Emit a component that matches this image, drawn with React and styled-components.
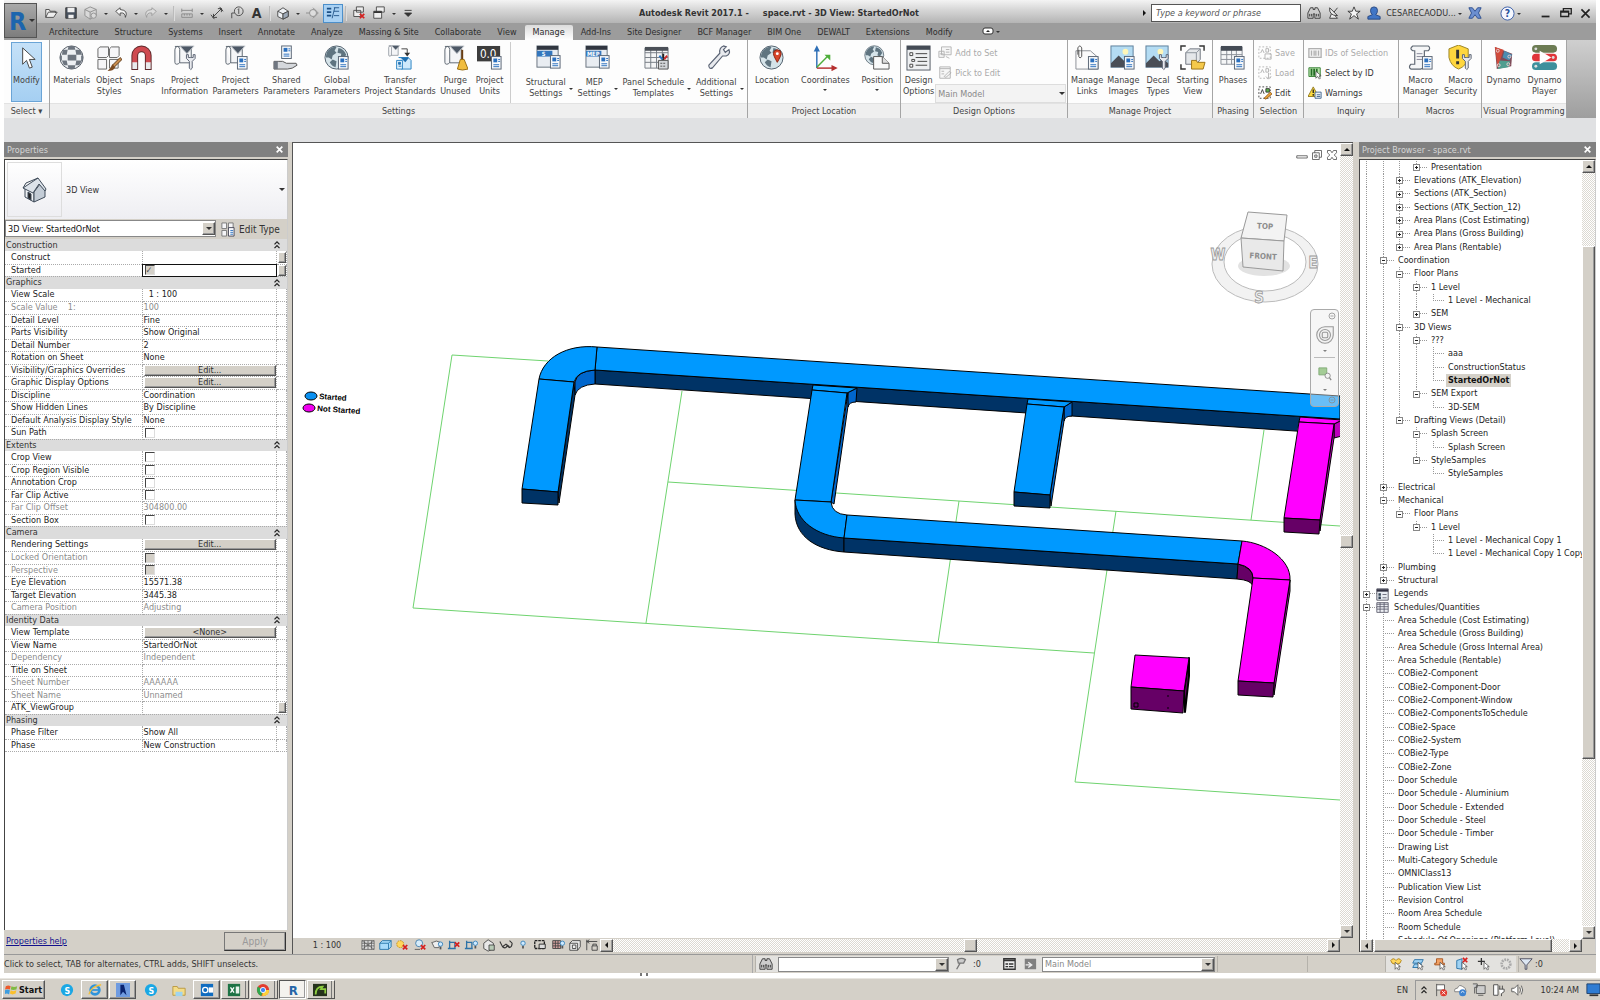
import React from 'react';
import styled, { createGlobalStyle, css } from 'styled-components';

const GlobalStyle = createGlobalStyle`
    * { box-sizing: border-box; }
    html, body { margin: 0; background: #fff; }
    body, button, input, select {
        font-family: 'DejaVu Sans Condensed', 'Open Sans', 'Liberation Sans', sans-serif;
        font-size: 9px;
        color: #333;
    }
    button { padding: 0; border: 0; background: none; }
`;

const raised = css`
    background: #d4d0c8;
    border: 1px solid;
    border-color: #fff #555 #555 #fff;
    box-shadow: inset -1px -1px #999;
`;

const checker = css`
    background: conic-gradient(#fff 25%, #dcd9d2 0 50%, #fff 0 75%, #dcd9d2 0) 0 0 / 2px 2px;
`;

/* ---------- frame ---------- */

const Screen = styled.div`
    height: 100vh;
    display: flex;
    flex-direction: column;
    overflow: hidden;
`;

const AppWindow = styled.div`
    flex: 1;
    min-height: 0;
    margin: 0 4px;
    display: flex;
    flex-direction: column;
    background: #d4d0c8;
`;

const Header = styled.header`
    position: relative;
`;

const AppButton = styled.button`
    position: absolute;
    left: 0;
    top: 3px;
    width: 33px;
    height: 35px;
    border: 1px solid #555;
    background: linear-gradient(#a9a9a9, #7d7d7d);
    display: flex;
    align-items: center;
    justify-content: center;
`;

const TitleBar = styled.div`
    height: 23px;
    padding: 3px 0 0 37px;
    background: linear-gradient(#f4f4f4, #d8d8d8 40%, #b4b4b4);
    display: flex;
    align-items: center;
`;

const QuickButton = styled.button`
    width: ${(props) => (props.$narrow ? 10 : 20)}px;
    height: 19px;
    display: flex;
    align-items: center;
    justify-content: center;
    ${(props) => props.$on && css`
        background: #a9d1f3;
        border: 1px solid #4c8fca;
    `}
`;

const QuickDivider = styled.span`
    width: 2px;
    height: 15px;
    margin: 0 2px;
    background: #bbb;
    border-right: 1px solid #ddd;
`;

const Caption = styled.h1`
    flex: 1;
    margin: 0;
    padding-right: 4px;
    font-size: 9px;
    text-align: center;
    white-space: pre;
`;

const TitleTools = styled.div`
    display: flex;
    align-items: center;
    gap: 5px;
    padding-right: 3px;
`;

const SearchInput = styled.input`
    width: 150px;
    height: 18px;
    padding: 0 4px;
    border: 1px solid #555;
    background: #fff;
    font-style: italic;
    &::placeholder { color: #555; opacity: 1; }
`;

const IconButton = styled.button`
    width: ${(props) => props.$w || 15}px;
    height: 18px;
    display: flex;
    align-items: center;
    justify-content: center;
    gap: 2px;
    white-space: nowrap;
`;

const TabBar = styled.nav`
    height: 17px;
    padding-left: 37px;
    background: #9c9c9c;
    display: flex;
    align-items: flex-end;
`;

const Tab = styled.a`
    height: 15px;
    line-height: 14px;
    padding: 0 8px;
    color: #2e2e2e;
    text-decoration: none;
    white-space: nowrap;
    ${(props) => props.$active && css`
        background: linear-gradient(#dcdcdc, #fff);
        border-radius: 2px 2px 0 0;
    `}
`;

/* ---------- ribbon ---------- */

const Ribbon = styled.div`
    height: 78px;
    display: flex;
    background: linear-gradient(#cfcfcf, #9e9e9e);
`;

const Group = styled.section`
    width: ${(props) => props.$w}px;
    flex: none;
    display: flex;
    flex-direction: column;
    background: #fdfdfd;
    border-right: 1px solid #a5a5a5;
`;

const GroupBody = styled.div`
    flex: 1;
    display: flex;
    justify-content: space-around;
    padding: 2px 1px 0;
`;

const GroupName = styled.div`
    height: 15px;
    line-height: 14px;
    background: #efefef;
    border-top: 1px solid #e2e2e2;
    text-align: center;
    white-space: nowrap;
    color: #444;
`;

const Cluster = styled.div`
    width: ${(props) => props.$w}px;
    padding-right: 4px;
    display: flex;
    justify-content: space-around;
    & + & {
        padding: 0 0 0 12px;
        border-left: 1px solid #ccc;
    }
`;

const ToolButton = styled.button`
    min-width: 31px;
    height: 60px;
    padding: 3px 1px 0;
    display: flex;
    flex-direction: column;
    align-items: center;
    line-height: 11px;
    white-space: pre;
    color: #444;
    ${(props) => props.$on && css`
        background: linear-gradient(#c5e1f8, #a5cff2);
        border: 1px solid #6aa4d6;
        padding-top: 2px;
    `}
`;

const ToolLabel = styled.span`
    margin-top: ${(props) => (props.$low ? 6 : 4)}px;
    display: flex;
    align-items: center;
    gap: 3px;
    flex-direction: ${(props) => (props.$under ? 'column' : 'row')};
`;

const Stack = styled.div`
    flex: ${(props) => (props.$grow ? 1 : 'none')};
    display: flex;
    flex-direction: column;
    gap: 2px;
    padding-top: 2px;
`;

const SmallTool = styled.button`
    height: 18px;
    display: flex;
    align-items: center;
    gap: 3px;
    padding-left: 3px;
    white-space: nowrap;
    color: ${(props) => (props.disabled ? '#aaa' : '#333')};
    svg { opacity: ${(props) => (props.disabled ? 0.45 : 1)}; }
`;

const OptionsBar = styled.div`
    height: 24px;
    background: #e0e1e3;
`;

/* ---------- shared controls ---------- */

const SelectFrame = styled.span`
    height: ${(props) => props.$h || 17}px;
    flex: ${(props) => (props.$w ? 'none' : 1)};
    width: ${(props) => (props.$w ? `${props.$w}px` : 'auto')};
    display: flex;
    align-items: center;
    background: ${(props) => (props.$flat ? '#f3f3f3' : '#fff')};
    border: 1px solid ${(props) => (props.$flat ? '#ddd' : '#888')};
`;

const Select = styled.select`
    appearance: none;
    flex: 1;
    min-width: 0;
    height: 100%;
    border: 0;
    padding: 0 2px;
    background: transparent;
    opacity: 1;
    color: ${(props) => (props.disabled ? '#888' : '#111')};
`;

const Arrow = styled.span`
    border: ${(props) => (props.$small ? 2 : 3)}px solid transparent;
    ${(props) => ({
        up: css`border-bottom-color: #111; margin-top: -3px;`,
        down: css`border-top-color: #333; margin-bottom: -3px;`,
        left: css`border-right-color: #111; margin-left: -3px;`,
        right: css`border-left-color: #111; margin-right: -3px;`,
    }[props.$to || 'down'])}
`;

const ScrollButton = styled.button`
    ${raised}
    width: 13px;
    height: 13px;
    flex: none;
    display: flex;
    align-items: center;
    justify-content: center;
`;

const ScrollTrack = styled.div`
    ${checker}
    display: flex;
    flex: ${(props) => (props.$fill ? 1 : 'none')};
    flex-direction: ${(props) => (props.$vertical ? 'column' : 'row')};
    ${(props) => (props.$vertical ? 'width: 13px;' : 'height: 13px;')}
`;

const Space = styled.span`
    flex: ${(props) => props.$n};
`;

const Thumb = styled.span`
    ${raised}
    flex: ${(props) => props.$n || '0 0 13px'};
`;

function Scrollbar({ vertical, fill, before, thumb, after }) {
    return (
        <ScrollTrack $vertical={vertical} $fill={fill}>
            <ScrollButton aria-label="Scroll back"><Arrow $to={vertical ? 'up' : 'left'} /></ScrollButton>
            <Space $n={before} />
            <Thumb $n={thumb} />
            <Space $n={after} />
            <ScrollButton aria-label="Scroll forward"><Arrow $to={vertical ? 'down' : 'right'} /></ScrollButton>
        </ScrollTrack>
    );
}

/* ---------- palettes ---------- */

const Workspace = styled.main`
    flex: 1;
    min-height: 0;
    display: flex;
    gap: 4px;
`;

const Palette = styled.aside`
    width: ${(props) => props.$w}px;
    flex: none;
    display: flex;
    flex-direction: column;
    padding-bottom: 2px;
`;

const PaletteTitle = styled.div`
    height: 15px;
    margin-bottom: 2px;
    padding: 0 4px 0 3px;
    background: #808080;
    color: #d6d6d6;
    display: flex;
    align-items: center;
    justify-content: space-between;
`;

const PaletteBody = styled.div`
    flex: 1;
    min-height: 0;
    display: flex;
    flex-direction: column;
    background: #fff;
    border: 1px solid #444;
    border-right-color: #ccc;
    border-bottom: 0;
`;

const TypeSelector = styled.button`
    height: 59px;
    padding: 2px;
    display: flex;
    align-items: center;
    gap: 4px;
    text-align: left;
    background: linear-gradient(#fff, #eeeef2);
`;

const TypePreview = styled.span`
    width: 55px;
    height: 55px;
    border: 1px solid #ddd;
    display: flex;
    align-items: center;
    justify-content: center;
`;

const Grow = styled.span`
    flex: 1;
`;

const FilterRow = styled.div`
    height: 20px;
    padding: 1px 0;
    display: flex;
    gap: 4px;
    background: #d4d0c8;
`;

const EditType = styled.button`
    width: 67px;
    display: flex;
    align-items: center;
    gap: 4px;
    font-size: 10px;
`;

const PropertyTable = styled.table`
    width: 100%;
    border-collapse: collapse;
    table-layout: fixed;
    line-height: 11px;
    tr { height: 12px; }
    tr:nth-child(even) { height: 13px; }
    th, td {
        height: inherit;
        padding: 0;
        font-weight: normal;
        text-align: left;
        white-space: pre;
        border-bottom: 1px dotted #aaa;
        border-right: 1px dotted #aaa;
    }
`;

const SectionRow = styled.tr`
    th {
        background: #dcdcdc;
        border: 0;
        padding: 0 5px 0 1px;
    }
`;

const SectionHead = styled.div`
    display: flex;
    justify-content: space-between;
    align-items: center;
`;

const PropertyRow = styled.tr`
    color: ${(props) => (props.$muted ? '#8c8c8c' : '#222')};
    th { padding-left: 6px; }
    td { padding-left: 1px; }
    ${(props) => props.$focus && css`
        td:nth-child(2) { border: 1px solid #111; }
    `}
`;

const CheckBox = styled.input`
    appearance: none;
    display: block;
    width: 10px;
    height: 10px;
    margin: 0 0 0 1px;
    border: 1px solid;
    border-color: #444 #ddd #ddd #444;
    background: ${(props) => (props.disabled || props.defaultChecked ? '#d4d0c8' : '#fff')};
    &:checked::before {
        content: '✓';
        display: block;
        line-height: 8px;
        color: #555;
    }
`;

const RowButton = styled.button`
    ${raised}
    display: block;
    width: 100%;
    height: 11px;
    line-height: 9px;
`;

const PaletteFooter = styled.div`
    height: 22px;
    padding: 0 2px;
    display: flex;
    align-items: center;
    justify-content: space-between;
    a { color: #11118c; }
`;

const ApplyButton = styled.button`
    ${raised}
    width: 62px;
    height: 19px;
    border-color: #777 #333 #333 #777;
    color: #999;
    font-size: 10px;
`;

/* ---------- project browser ---------- */

const TreeArea = styled.div`
    flex: 1;
    min-height: 0;
    display: flex;
`;

const Tree = styled.ul`
    flex: 1;
    margin: 0;
    padding: 1px 0 0 6px;
    overflow: hidden;
    list-style: none;
`;

const TreeRow = styled.li`
    height: 13px;
    display: flex;
    white-space: nowrap;
    line-height: 13px;
    color: #222;
    &:nth-child(3n) { height: 14px; }
`;

const dotsDown = 'repeating-linear-gradient(#999 0 1px, transparent 1px 2px)';
const dotsAcross = 'repeating-linear-gradient(90deg, #999 0 1px, transparent 1px 2px)';

const Guide = styled.span`
    width: ${(props) => (props.$level % 3 === 1 ? 16 : 17)}px;
    flex: none;
    background: ${(props) => (props.$line ? dotsDown : 'none')} 0 0 / 1px 100% no-repeat;
`;

const Elbow = styled.span`
    width: 15px;
    flex: none;
    display: flex;
    align-items: center;
    background: ${dotsDown} 0 0 / 1px ${(props) => (props.$more ? '100%' : '50%')} no-repeat,
        ${dotsAcross} 0 6px / 11px 1px no-repeat;
`;

const Toggle = styled.button`
    width: 7px;
    height: 7px;
    margin-left: -3px;
    border: 1px solid #888;
    background: linear-gradient(#222, #222) center / 3px 1px no-repeat,
        linear-gradient(#222, #222) center / ${(props) => (props.$plus ? '1px 3px' : '0 0')} no-repeat, #fff;
`;

const Leaf = styled.span`
    ${(props) => props.$current && css`
        margin: 0 -2px;
        padding: 0 2px;
        background: #d4d0c8;
        font-weight: bold;
        color: #111;
    `}
`;

const TreeIcon = styled.span`
    width: 13px;
    display: flex;
    align-items: center;
    margin: 0 5px 0 -5px;
`;

const Corner = styled.span`
    width: 13px;
    height: 13px;
    background: #d4d0c8;
`;

const Line = styled.div`
    display: flex;
`;

/* ---------- view ---------- */

const ViewColumn = styled.section`
    flex: 1;
    min-width: 0;
    display: flex;
    flex-direction: column;
    border-left: 1px solid #555;
    border-top: 1px solid #555;
    margin-right: 2px;
    padding-bottom: 2px;
`;

const ViewRow = styled.div`
    flex: 1;
    min-height: 0;
    display: flex;
`;

const Viewport = styled.div`
    flex: 1;
    min-width: 0;
    position: relative;
    background: #fff;
    overflow: hidden;
`;

const Model = styled.svg`
    display: block;
    width: 100%;
    height: 100%;
`;

const ViewButtons = styled.div`
    position: absolute;
    top: 3px;
    right: 1px;
    display: flex;
`;

const NavBar = styled.div`
    position: absolute;
    top: 166px;
    right: 1px;
    width: 29px;
    height: 98px;
    border: 1px solid #aaa;
    border-radius: 4px;
    background: rgba(235, 235, 235, 0.45);
    display: flex;
    flex-direction: column;
    align-items: center;
    justify-content: space-between;
    padding: 2px;
    & > ${Arrow} { opacity: 0.6; }
`;

const NavRule = styled.span`
    width: 21px;
    height: 1px;
    background: #bbb;
`;

const NavEdge = styled.button`
    align-self: flex-end;
    height: 8px;
    width: 8px;
    display: flex;
`;

const ViewBar = styled.div`
    height: 14px;
    display: flex;
    align-items: center;
`;

const ScaleButton = styled.button`
    width: 66px;
    padding-left: 2px;
    text-align: center;
`;

const ViewTool = styled.button`
    width: 17px;
    height: 14px;
    flex: none;
    display: flex;
    align-items: center;
    justify-content: center;
    &:nth-of-type(4n) { width: 18px; }
`;

/* ---------- bottom ---------- */

const StatusBar = styled.footer`
    height: 19px;
    display: flex;
    align-items: center;
    gap: 2px;
    border-top: 1px solid #999;
`;

const StatusText = styled.div`
    flex: 1;
    height: 100%;
    padding-top: 4px;
    border-right: 1px solid #aaa;
`;

const StatusCell = styled.div`
    width: ${(props) => props.$w}px;
    height: 16px;
    display: flex;
    align-items: center;
    justify-content: ${(props) => (props.$spread ? 'space-around' : 'flex-start')};
    gap: 2px;
    background: ${(props) => (props.$light ? '#e3e2df' : 'transparent')};
    border-left: 1px solid #b5b2ab;
`;

const Grip = styled.div`
    height: 5px;
    padding-left: 40%;
    background: #fff;
    display: flex;
    gap: 4px;
    &::before, &::after {
        content: '';
        width: 2px;
        height: 3px;
        background: #777;
    }
`;

const TaskBar = styled.div`
    height: 22px;
    padding: 0 0 0 2px;
    display: flex;
    align-items: center;
    background: #d4d0c8;
    border-top: 1px solid #e8e6e1;
`;

const StartButton = styled.button`
    ${raised}
    width: 43px;
    height: 19px;
    margin-right: 8px;
    display: flex;
    align-items: center;
    justify-content: center;
    gap: 1px;
    font-weight: bold;
    color: #111;
`;

const TaskButton = styled.button`
    width: 27px;
    height: 19px;
    margin-right: 1px;
    display: flex;
    align-items: center;
    justify-content: center;
    ${(props) => props.$open && raised}
    ${(props) => props.$open === 'many' && css`
        width: 28px;
        box-shadow: inset -2px 0 #d4d0c8, inset -3px 0 #777;
        padding-right: 3px;
    `}
    ${(props) => props.$active && css`
        background: #f4f2ee;
        border-color: #555 #fff #fff #555;
    `}
`;

const Tray = styled.div`
    width: 185px;
    height: 20px;
    margin-left: 7px;
    padding-left: 3px;
    border-left: 1px solid #999;
    border-top: 1px solid #999;
    display: flex;
    align-items: center;
    gap: 5px;
    time { flex: 1; text-align: right; padding-right: 2px; white-space: nowrap; }
`;

/* ---------- icon drawings ---------- */

const sheet = (x, y) => (
    <g>
        <rect x={x} y={y} width="10" height="13" fill="#f7f9fb" stroke="#5a6675" />
        <rect x={x + 2} y={y + 2} width="4" height="4" fill="#2a6fbe" />
        <path d={`M${x + 7} ${y + 3}h2M${x + 7} ${y + 5}h2M${x + 2} ${y + 8.5}h6M${x + 2} ${y + 10.5}h6`} stroke="#2a6fbe" />
    </g>
);

const scroll = (
    <g stroke="#5f6873" fill="#f4f5f7">
        <path d="M3 1.500h17v17H8v-14Q8 2 5.500 1.500Q3 2 3 5v13q0 2 2 2t3-2" />
        <path d="M8 1h15l-7.500 8Z" fill="#4d5866" stroke="#c9cdd2" />
    </g>
);

const globe = (
    <g>
        <circle cx="13" cy="13" r="12" fill="#d5e3e9" stroke="#51606c" />
        <path d="M5 5q4-4 8-3l-2 4 2 2-4 3-1 4-3-2-3 0q0-5 3-8ZM15 3q6 1 8 7l-3 5-3-2 1-4-4-1ZM9 15l4 2-1 6q-4-1-6-5Z" fill="#5f7480" />
    </g>
);

const wrench = (x, y, k) => (
    <path
        transform={`translate(${x} ${y}) scale(${k})`}
        d="M2 22 L14 9 Q13 3 18 1 L21 2 L18 5 L20 8 L24 5 Q26 10 21 12 L17 12 L6 25 Q2 27 2 22Z"
        fill="#e8eaee"
        stroke="#596273"
        strokeWidth={1.2 / k}
    />
);

// upright spanner laid over a bigger icon
const spanner = (
    <path
        d="M15 10v4l3 3v7q1.500 3 3 0v-7l3-3v-4l-2 0v3h-2l-1 0h-2v-3Z"
        fill="#e8eaee"
        stroke="#596273"
        strokeLinejoin="round"
    />
);

const picture = (
    <g>
        <rect x="1" y="1" width="23" height="22" fill="#b4dcf3" stroke="#5c7e9a" />
        <circle cx="16" cy="7" r="3" fill="#fff6b8" />
        <path d="M1 19l8-8 6 6 4-3 5 5v4H1Z" fill="#4a4e56" />
    </g>
);

const windowFrame = (text) => (
    <g>
        <rect x="1" y="1" width="22" height="22" fill="#e9edf2" stroke="#68727e" />
        <rect x="1" y="1" width="22" height="4" fill="#303640" />
        <rect x="1" y="6" width="16" height="6" fill="#3477bd" />
        <text x={text.length > 1 ? 2 : 6} y="11" fontSize="6" fontWeight="bold" fill="#fff">{text}</text>
        {sheet(15, 11)}
    </g>
);

const big = {
    modify: <path d="M9 3v17l4-4 3 8 3-1-3-8h6Z" fill="#fff" stroke="#444" />,
    materials: (
        <g>
            <circle cx="13" cy="13" r="12" fill="#edf0f3" stroke="#555d66" />
            <path d="M10 1h6l1 4H9ZM4 5l5 0-1 5H3ZM17 5h5l2 5h-6ZM9 10h9v6H9ZM1 11h2v5H1ZM23 11h2v5h-2ZM3 16h5l1 5H5ZM18 16h6l-3 5h-4ZM9 21h8l-1 4h-6Z" fill="#6d757f" />
        </g>
    ),
    styles: (
        <g>
            <path d="M2 4l2-2h9v9l-2 2H2ZM14 4l2-2h8v9l-2 2h-8ZM2 15h9v10H2ZM14 15h9v9h-9Z" fill="#f6f6f8" stroke="#666" />
            <path d="M25 13l2 2-8 8-2-2Z" fill="#c98d4e" stroke="#5e3b1c" />
            <path d="M17 20l3 3q-2 4-8 4 3-2 5-7Z" fill="#7b4a21" />
        </g>
    ),
    snaps: (
        <g fill="none">
            <path d="M6 26V11a7 7 0 0 1 14 0v15" stroke="#5e2a2c" strokeWidth="7" />
            <path d="M6 19V11a7 7 0 0 1 14 0v8" stroke="#cf4a50" strokeWidth="5" />
            <path d="M6 18v7M20 18v7" stroke="#e8eaec" strokeWidth="5" />
        </g>
    ),
    info: <g>{scroll}{spanner}</g>,
    params: <g>{scroll}{sheet(15, 12)}</g>,
    shared: (
        <g>
            {sheet(9, 1)}
            <path d="M1 17h5q4-1 8 2h10l1 2q-5 4-10 4H1Z" fill="#d5d8dc" stroke="#555" />
            <path d="M1 17h4v8H1Z" fill="#707781" />
        </g>
    ),
    global: <g>{globe}{sheet(15, 12)}</g>,
    transfer: (
        <g>
            <g transform="scale(.58)">{scroll}</g>
            <path d="M15 4h6v5" fill="none" stroke="#444" /><path d="M18 8h6l-3 4Z" fill="#333" />
            <path d="M12 13h10l3 3v9H15v-9" fill="#cfe9fb" stroke="#2b83c4" />
            <path d="M14 13h9l-4 5Z" fill="#1f6dae" />
            <path d="M10 16h6v9h-6Z" fill="#e6f4fd" stroke="#2b83c4" />
            <path d="M12 18h2v2h-2ZM12 22h3" stroke="#2878b8" fill="#2878b8" />
        </g>
    ),
    purge: (
        <g>
            {scroll}
            <path d="M21 5v10" stroke="#6a3d12" strokeWidth="2" />
            <path d="M19 15h4l4 10q-6 2-11 0Z" fill="#f1bd3e" stroke="#996c10" />
        </g>
    ),
    units: (
        <g>
            <rect x="0" y="1" width="24" height="16" fill="#3d3d3d" />
            <text x="3" y="14" fontSize="12" fill="#fff">0.0</text>
            {sheet(15, 12)}
        </g>
    ),
    structural: windowFrame('S'),
    mep: windowFrame('MEP'),
    panel: (
        <g>
            <path d="M1 3h24v21H1ZM1 8h24M1 13h24M1 18h24M7 3v21M13 3v21M19 3v21" fill="#f4f5f6" stroke="#767c84" />
            <rect x="1" y="2" width="24" height="4" fill="#4b5058" />
            <path d="M20 9v7" stroke="#222" strokeWidth="2" /><path d="M16 11l3 4" stroke="#2575c8" strokeWidth="2" /><path d="M24 11l-3 4" stroke="#d02a2a" strokeWidth="2" />
            <path d="M15 16h10v9H15Z" fill="#d3d6d9" stroke="#555" /><path d="M17 19h6M17 22h6" stroke="#555" strokeDasharray="2 1" />
        </g>
    ),
    wrench: wrench(0, 0, 0.95),
    location: (
        <g>
            {globe}
            <path d="M19 18q-4-7-4-9a4 4 0 0 1 8 0q0 2-4 9Z" fill="#d8452a" stroke="#8a2412" /><circle cx="19" cy="9" r="1.500" fill="#fff" />
        </g>
    ),
    coordinates: (
        <g fill="none" strokeWidth="1.500">
            <path d="M5 24V5" stroke="#2e6fb6" /><path d="M3 6l2-4 2 4Z" fill="#2e6fb6" stroke="#2e6fb6" />
            <path d="M5 24h17" stroke="#b52f2f" /><path d="M21 22l4 2-4 2Z" fill="#b52f2f" stroke="#b52f2f" />
            <path d="M5 23L17 11" stroke="#4fae3a" /><path d="M13 10h6v6Z" fill="#4fae3a" />
        </g>
    ),
    position: (
        <g>
            <g transform="scale(.82)">{globe}</g>
            <path d="M10 12h9l7 7v6H10Z" fill="#fafafa" stroke="#555" /><path d="M19 12v7h7" fill="#ddd" stroke="#555" />
        </g>
    ),
    options: (
        <g>
            <rect x="1" y="1" width="24" height="25" fill="#eef0f2" stroke="#555c66" /><rect x="1" y="1" width="24" height="4" fill="#444b55" />
            <path d="M10 9h12M10 13h12M12 17h10M10 21h12" stroke="#444" /><path d="M4 8h3v3H4ZM6 15h3v2H6ZM4 20h3v3H4Z" fill="#fff" stroke="#444" />
        </g>
    ),
    links: (
        <g>
            <path d="M2 6h15l8 7v12H2Z" fill="#fbfbfb" stroke="#8b9096" />
            <path d="M4 10V3q2-4 4 0v9q-2 3-3 0V5" fill="none" stroke="#555" />{sheet(15, 12)}
        </g>
    ),
    images: <g>{picture}{sheet(15, 12)}</g>,
    decal: <g>{picture}{spanner}</g>,
    starting: (
        <g>
            <path d="M1 6V1h5M20 1h5v5M1 20v5h5" fill="none" stroke="#333" strokeWidth="1.500" />
            <path d="M6 8l4-4h11v11l-4 5H6Z" fill="#e4e7ea" stroke="#707780" /><path d="M6 8h11v12M17 8l4-4" fill="none" stroke="#8d949c" />
            <path d="M12 16h5l1 2h8l-2 7H12Z" fill="#f5c94b" stroke="#9b7417" />
        </g>
    ),
    phases: (
        <g>
            <path d="M1 2h22v18H1ZM1 10h22M1 15h22M7 5v15M12 5v15M17 5v15" fill="#f5f6f7" stroke="#8a9098" /><rect x="1" y="1" width="22" height="5" fill="#444b55" />
            {sheet(15, 12)}
        </g>
    ),
    macroManager: (
        <g>
            <path d="M5 1h16q3 2 0 5h-4v14q0 4-4 5H3q-3-2 0-5h4V6H5q-4-2 0-5Z" fill="#f5f6f7" stroke="#5f6873" strokeWidth="1.200" /><path d="M9 9h6M9 12h6M9 15h6" stroke="#889" />
            {sheet(15, 12)}
        </g>
    ),
    macroSecurity: (
        <g>
            <path d="M11 0l10 4v9q-2 9-10 12Q3 22 1 13V4Z" fill="#ffd73e" stroke="#9a8326" /><path d="M10 5v9M10 17v3" stroke="#333" strokeWidth="3" />
            {spanner}
        </g>
    ),
    dynamo: (
        <g>
            <path d="M4 2l18 7-1 13-15 3Z" fill="#7f4b58" /><path d="M4 2l9 3-6 19Z" fill="#d04a3b" /><path d="M14 6l8 4-3 6-7-3Z" fill="#4b8db1" /><path d="M9 16l11 1-2 6-11 2Z" fill="#4f9e90" />
            <g fill="none" stroke="#e9cfd0"><circle cx="7" cy="6" r="1.500" /><circle cx="19" cy="12" r="1.500" /><circle cx="8" cy="21" r="1.500" /><circle cx="18" cy="20" r="1.500" /></g>
        </g>
    ),
    player: (
        <g>
            <rect x="0" y="0" width="26" height="8" rx="4" fill="#6d7c54" /><rect x="0" y="9" width="26" height="8" rx="4" fill="#e0353a" /><rect x="0" y="18" width="26" height="8" rx="4" fill="#3d8f9c" />
            <path d="M8 6l12 7-12 7Z" fill="#fff" /><g fill="#ddd"><circle cx="4" cy="4" r="1.500" /><circle cx="22" cy="13" r="1.500" /><circle cx="4" cy="22" r="1.500" /></g>
        </g>
    ),
};

const lamp = (x, y) => (
    <g>
        <circle cx={x} cy={y} r="2.500" fill="#cfeaff" stroke="#3580b8" />
        <path d={`M${x} ${y + 3}v3`} stroke="#555" strokeWidth="2" />
    </g>
);
const redX = (x, y) => <path d={`M${x} ${y}l5 5m0-5l-5 5`} stroke="#d6201f" strokeWidth="2" />;
const cursor = (x, y) => <path d={`M${x} ${y}v8l2-2 2 3 1-1-1-3h2Z`} fill="#fff" stroke="#444" strokeWidth=".8" />;

const small = {
    open: <path d="M2 13V4h4l1 2h6v2M2 13l3-6h10l-4 6Z" fill="#eee" stroke="#444" />,
    save: <g><path d="M2 2h12v12H2Z" fill="#49525f" stroke="#333" /><path d="M4 2h8v5H4ZM5 10h6v4H5Z" fill="#f0f0f0" /></g>,
    sync: <g fill="#d9d9d9" stroke="#8b8b8b"><path d="M7 1l7 3v7l-7 4-6-4V4ZM1 4l6 3 7-3M7 7v8" /><circle cx="11" cy="11" r="3" /></g>,
    undo: <path d="M7 2L2 6l5 5V8q6-1 6 5 4-8-6-9Z" fill="#f5f5f5" stroke="#444" />,
    redo: <path d="M9 2l5 4-5 5V8Q3 7 3 13-1 5 9 4Z" fill="#ddd" stroke="#999" />,
    measure: <path d="M2 5h12M2 3v4M14 3v4M2 9h12v4H2ZM5 9v2M8 9v2M11 9v2" fill="none" stroke="#888" />,
    dim: <path d="M3 13L13 3M1 10l4 5M11 1l4 5M4 9v4h4M9 3h4v4" fill="none" stroke="#333" />,
    tag: <g fill="none" stroke="#444"><circle cx="10" cy="6" r="5" /><path d="M5 8H2v6M10 3v6M9 4l1-1" /></g>,
    letter: <text x="2" y="14" fontSize="16" fontWeight="bold" fill="#333">A</text>,
    house: <g stroke="#444"><path d="M2 6l6-4 6 4v6l-6 3-6-3Z" fill="#eef1f5" /><path d="M2 6l6 3 6-3M8 9v6" fill="none" /><path d="M8 9l6-3v6l-6 3Z" fill="#9da9b8" /></g>,
    section: <g stroke="#888" fill="#ddd"><path d="M8 2l6 6-6 6M0 8h4" fill="none" /><circle cx="8" cy="8" r="4" /></g>,
    thin: <g stroke="#1b4f85"><path d="M1 3h5M1 7h5M1 11h5" strokeWidth="2" /><path d="M9 2h6M9 6h6M9 11h6M7 14l3-12" /></g>,
    closeHidden: <g><path d="M5 1h8v6H5ZM2 5h8v7H2Z" fill="#eee" stroke="#444" />{redX(9, 9)}</g>,
    switchWin: <g><path d="M5 1h9v6H5ZM2 6h9v8H2Z" fill="#eee" stroke="#444" /><path d="M2 7h9" stroke="#333" strokeWidth="2" /></g>,
    customize: <path d="M3 5h8M3 8h8l-4 4Z" stroke="#333" fill="#333" />,
    binoculars: <path d="M4 2h3v2h2V2h3l3 6v6H9V9H7v5H1V8ZM3 9v3M5 9v3M11 9v3M13 9v3" fill="#ccc" stroke="#333" />,
    dish: <path d="M3 2q-1 9 9 9M3 2l9 9M8 7l4-5M5 9l-2 5h9l-3-3" fill="#eee" stroke="#333" />,
    star: <path d="M8 1l2 5h5l-4 3 2 6-5-4-5 4 2-6-4-3h5Z" fill="#f5f5f5" stroke="#333" />,
    person: <path d="M8 1q4 0 4 4 0 3-2 5l5 2v3H1v-3l5-2Q4 8 4 5q0-4 4-4Z" fill="#4176c6" stroke="#23437f" />,
    exchange: <path d="M1 2h4l3 4 3-4h4l-3 6 3 6h-4l-3-4-3 4H1l3-6Z" fill="#6c8fd0" stroke="#28498c" />,
    help: <g><circle cx="8" cy="8" r="7" fill="#f6f8ff" stroke="#3a5ea8" /><text x="5" y="12" fontSize="11" fontWeight="bold" fill="#27509c">?</text></g>,
    min: <path d="M3 12h9" stroke="#222" strokeWidth="2" />,
    restore: <path d="M5 6V3h9v6h-3M2 6h9v6H2ZM2 7h9" fill="none" stroke="#222" strokeWidth="1.500" />,
    close: <path d="M3 3l10 10M13 3L3 13" stroke="#222" strokeWidth="2" />,
    addSet: <path d="M4 1h11v9H4ZM1 6h6v7H1ZM9 4h4M9 7h4M2 9h4M9 12l4 2" fill="#eee" stroke="#555" />,
    pickEdit: <path d="M2 1h12v13H2ZM2 3h12M4 6h3M4 9h3M7 12l6-6 2 2-6 5Z" fill="#eee" stroke="#555" />,
    selSave: <g fill="none" stroke="#555"><path d="M1 1h13v13H1Z" strokeDasharray="2 2" /><path d="M3 8l2-4 2 4M9 3h3v4H9ZM8 9h7v6H8Z" /></g>,
    selLoad: <g fill="none" stroke="#555"><path d="M1 1h13v13H1Z" strokeDasharray="2 2" /><path d="M3 8l2-4 2 4M9 3h3v4H9ZM12 8v6M9 12l3 3 3-3" /></g>,
    selEdit: <g fill="none" stroke="#333"><path d="M1 1h13v13H1Z" strokeDasharray="2 2" /><path d="M9 3h4v4H9Z" fill="#5ab549" /><path d="M3 9l2-5 2 5" /><path d="M7 14l7-7 2 2-7 6Z" fill="#f1a73c" stroke="#8b5312" /></g>,
    ids: <path d="M1 3h14v10H1ZM4 5v6M7 5v6M9 5v6M12 5v6" fill="#eee" stroke="#555" strokeWidth="1.500" />,
    selectId: <g><path d="M1 2h13v10H1Z" fill="#b6e3a9" stroke="#2f7d2d" /><path d="M4 3v8M7 3v8M10 3v8" stroke="#226b25" strokeWidth="2" />{cursor(9, 6)}</g>,
    warnings: <g><path d="M6 1l6 11H0Z" fill="#ffdb3d" stroke="#8c741a" /><path d="M6 4v4M6 9v2" stroke="#222" strokeWidth="1.500" /><path d="M8 7h7v7H8Z" fill="#eef3f8" stroke="#3b5f8a" /><path d="M10 10h4M10 12h4" stroke="#3b5f8a" /></g>,
    editType: <g><path d="M2 1h5v6H2ZM9 1h5v6H9ZM2 9h5v6H2Z" fill="#f5f5f7" stroke="#777" /><path d="M9 6h6v9H9Z" fill="#fff" stroke="#445" /><path d="M11 9h3M11 11h3M11 13h3" stroke="#2a6fbe" /></g>,
    grid: <path d="M1 3h14v10H1ZM1 6h14M1 9h14M4 3v10M8 3v10M12 3v10M1 3l14 10M15 3L1 13" fill="#ddd" stroke="#555" strokeWidth=".8" />,
    box: <path d="M2 6l3-3h10v7l-3 3H2ZM2 6h10v7M12 6l3-3" fill="#a8dcfa" stroke="#2273a8" />,
    sun: <g><circle cx="6" cy="7" r="4" fill="#ffd65c" stroke="#c08a14" strokeDasharray="2 1" />{redX(9, 8)}</g>,
    shadow: <g><circle cx="7" cy="6" r="4" fill="#d6ecfa" stroke="#3e7cab" /><path d="M2 13h6" stroke="#555" />{redX(9, 8)}</g>,
    teapot: <g><path d="M2 5l3 6h5l2-6q-5-3-9 0Z" fill="#eee" stroke="#555" />{lamp(12, 7)}</g>,
    crop: <g><path d="M3 3v9M1 12h9M3 5h6v7" fill="none" stroke="#2d73a8" strokeWidth="1.500" />{redX(9, 5)}</g>,
    cropLamp: <g><path d="M3 3v9M1 12h9M3 5h6v7" fill="none" stroke="#2d73a8" strokeWidth="1.500" />{lamp(13, 6)}</g>,
    lock: <g><path d="M2 6l5-4 6 4v6l-6 3-5-3Z" fill="#e8e8e8" stroke="#444" /><path d="M8 8h6v6H8Z" fill="#b8cbb6" stroke="#444" /></g>,
    glasses: <path d="M1 4l3 6q4 3 5-1l3 2q3-1 3-5l-3-3M4 10l4-3 4 3" fill="none" stroke="#333" strokeWidth="1.200" />,
    bulb: lamp(8, 6),
    reveal: <g fill="none" stroke="#222"><path d="M2 3h11v9H2Z" strokeDasharray="3 1" strokeWidth="1.500" /><path d="M7 7h7v5H7Z" fill="#ddd" /></g>,
    workshare: <g><path d="M2 3h9v9H2ZM2 6h9M2 9h9M5 3v9M8 3v9" fill="#d7a3a0" stroke="#444" />{lamp(13, 6)}</g>,
    displace: <path d="M2 6l3-3h9v7l-3 4H2ZM2 6h9v8M5 8h4v4H5Z" fill="#eee" stroke="#444" />,
    constraint: <path d="M2 2v12M2 4h12M5 2L2 4l3 2M8 9h6v5H8ZM9 9V7h4v2" fill="none" stroke="#444" />,
    chevrons: <path d="M4 7l4-4 4 4M4 13l4-4 4 4" fill="none" stroke="#222" strokeWidth="2" />,
    legend: <g><path d="M1 1h14v14H1Z" fill="#e8ecf2" stroke="#445" /><path d="M1 3h14" stroke="#334" strokeWidth="3" /><path d="M3 8h3M3 12h3" stroke="#345" strokeWidth="3" /><path d="M8 8h5M8 12h5" stroke="#556" /></g>,
    schedule: <path d="M1 2h14v12H1ZM1 4h14M1 7h14M1 10h14M5 2v12M10 2v12" fill="#eef0f4" stroke="#556" />,
    hammer: <path d="M3 14l4-7M4 3q5-3 9 0l-2 4H5Z" fill="#ccc" stroke="#777" strokeWidth="1.500" />,
    list: <path d="M2 2h13v12H2ZM2 4h13M4 8h3M8 8h5M4 11h3M8 11h5" fill="#eee" stroke="#333" strokeWidth="1.500" />,
    door: <g><path d="M2 2h13v12H2Z" fill="#808080" /><path d="M3 9h6M6 6l4 3-4 3" fill="none" stroke="#eee" strokeWidth="1.500" /></g>,
    keys: <g><path d="M2 4q3-4 6 0 3-4 6 0-1 4-4 4H6Q3 8 2 4" fill="#ffd75c" stroke="#aa7e12" />{cursor(7, 6)}</g>,
    underlay: <g><path d="M4 3h10l-2 4H2ZM4 8h8l-2 4H2Z" fill="#9fd2f3" stroke="#236fa6" />{cursor(8, 6)}</g>,
    pin: <g><path d="M4 2h7v5h2v2H2V7h2Z" fill="#f2a063" stroke="#a4511b" />{cursor(8, 6)}</g>,
    face: <g><path d="M2 4l6-2v12l-6-1Z" fill="#9fd2f3" stroke="#236fa6" />{redX(9, 1)}{cursor(8, 6)}</g>,
    drag: <g><path d="M5 1v8M1 5h8" stroke="#333" strokeWidth="1.500" />{cursor(8, 6)}</g>,
    gear: <circle cx="8" cy="8" r="5" fill="none" stroke="#aaa" strokeWidth="3" strokeDasharray="2 1" />,
    funnel: <path d="M1 2h14L9 9v5H7V9Z" fill="#dce6f2" stroke="#445" />,
    skype: <g><circle cx="8" cy="8" r="7" fill="#1aa7e4" /><text x="5" y="12" fontSize="10" fontWeight="bold" fill="#fff">S</text></g>,
    ie: <g fill="none"><circle cx="8" cy="8" r="5" stroke="#2e94dc" strokeWidth="3" /><path d="M4 8h9" stroke="#2e94dc" strokeWidth="2" /><path d="M1 13Q3 4 15 2" stroke="#f3c03d" strokeWidth="1.500" /></g>,
    autodesk: <g><path d="M0 0h16v16H0Z" fill="#6f9be0" /><path d="M5 14V2h4l3 12-4-4Z" fill="#0a2470" /></g>,
    folder: <g><path d="M1 4h5l1 2h8v8H1Z" fill="#f4dc86" stroke="#b7953a" /><path d="M4 10h8v5H4Z" fill="#9fd4ef" /></g>,
    outlook: <g><path d="M1 1h14v14H1Z" fill="#0f6cc0" /><circle cx="6" cy="8" r="3" fill="none" stroke="#fff" strokeWidth="1.500" /><path d="M10 5h5v6h-5Z" fill="#fff" /></g>,
    excel: <g><path d="M1 1h14v14H1Z" fill="#1e7345" /><path d="M4 5l4 6M8 5l-4 6" stroke="#fff" strokeWidth="1.500" /><path d="M10 4h4v8h-4Z" fill="#e8f4ec" /></g>,
    chrome: <g><circle cx="8" cy="8" r="7" fill="#e33b2e" /><path d="M8 8L2 4q-3 7 4 11Z" fill="#2da94f" /><path d="M8 8h7q0 7-8 7Z" fill="#fdd13a" /><circle cx="8" cy="8" r="3" fill="#4286f3" stroke="#fff" /></g>,
    revit: <text x="3" y="14" fontSize="15" fontWeight="bold" fill="#2465a8">R</text>,
    camtasia: <g><path d="M0 1h16v14H0Z" fill="#25321c" /><path d="M3 13q0-9 8-9l-2 3h5v5" fill="none" stroke="#8ccc3f" strokeWidth="2" /></g>,
    windows: <g><path d="M1 4q3-2 6 0l-1 4q-3-1-6 0Z" fill="#ee5a2b" /><path d="M8 4q3 2 7 0l-1 4q-4 1-7 0Z" fill="#7fba42" /><path d="M0 9q3-2 6 0l-1 5q-3-2-6 0Z" fill="#3c9de0" /><path d="M7 9q3 2 7 0l-1 4q-4 2-7 0Z" fill="#fbc02c" /></g>,
    flag: <g><path d="M3 1v14M3 2h9v6H3" fill="#fff" stroke="#555" /><circle cx="11" cy="11" r="4" fill="#e03a2f" /><path d="M9 9l4 4m0-4l-4 4" stroke="#fff" /></g>,
    cloud: <g><path d="M2 10q-1-4 3-4 2-5 6-2 4 1 4 6Z" fill="#fff" stroke="#777" /><circle cx="11" cy="11" r="4" fill="#3a80d0" /><path d="M9 11q2-3 4 0" fill="none" stroke="#fff" /></g>,
    network: <path d="M5 3h10v9H5ZM7 14h6M1 1h5v4H3v7" fill="#ccc" stroke="#555" />,
    power: <path d="M3 2h5v12H3ZM10 3v4M13 3v4M9 7h6v3l-3 2v3" fill="#fff" stroke="#444" />,
    volume: <path d="M2 6h3l4-4v12l-4-4H2ZM11 5q2 3 0 6M13 3q3 5 0 10" fill="#fff" stroke="#555" />,
    desktop: <g><path d="M1 1h15v11H1Z" fill="#2f7cd3" stroke="#1c3b66" /><path d="M4 14h10" stroke="#333" strokeWidth="2" /></g>,
    wheel: <g fill="#f2f2f2" stroke="#999" strokeWidth=".8"><path d="M2 8a6 6 0 0 1 6-6h6v6a6 6 0 0 1-12 0Z" /><circle cx="8" cy="8" r="4" /><rect x="6" y="6" width="4" height="4" rx="1" /></g>,
    zoomRegion: <g><path d="M1 1h9v8H1Z" fill="#a4cc96" stroke="#7ea873" /><circle cx="11" cy="10" r="3" fill="#f4f4f4" stroke="#888" /><path d="M13 12l2 3" stroke="#888" strokeWidth="1.500" /></g>,
    ring: <g fill="none" stroke="#888" strokeWidth="1.500"><circle cx="8" cy="8" r="6" /><path d="M5 8h6" /></g>,
    viewMin: <path d="M1 9h14v3H1Z" fill="#fff" stroke="#444" />,
    viewRestore: <path d="M5 5V2h9v9h-3M2 5h9v9H2ZM5 8h3v3H5Z" fill="none" stroke="#444" />,
    viewClose: <path d="M2 2h4l2 3 2-3h4v3l-3 3 3 3v3h-4l-2-3-2 3H2v-3l3-3-3-3Z" fill="#fff" stroke="#444" />,
};

const Icon = ({ name, size = 14 }) => (
    <svg width={size} height={size} viewBox="0 0 16 16" aria-hidden="true">{small[name]}</svg>
);

const BigIcon = ({ name }) => (
    <svg width="26" height="26" viewBox="0 0 27 27" aria-hidden="true">{big[name]}</svg>
);

const CloseMark = () => (
    <svg width="9" height="9" viewBox="0 0 16 16" aria-hidden="true">
        <path d="M3 3l10 10M13 3L3 13" stroke="#fff" strokeWidth="3" />
    </svg>
);

/* ---------- data ---------- */

const quickTools = [
    'open', 'save', 'sync', '>', 'undo', '>', 'redo', '>', '|', 'measure', '>', 'dim', 'tag', 'letter', '|',
    'house', '>', 'section', 'thin', '|', 'closeHidden', 'switchWin', '>', 'customize',
];

const tabs = [
    'Architecture', 'Structure', 'Systems', 'Insert', 'Annotate', 'Analyze', 'Massing & Site', 'Collaborate',
    'View', 'Manage', 'Add-Ins', 'Site Designer', 'BCF Manager', 'BIM One', 'DEWALT', 'Extensions', 'Modify',
];

const properties = [
    ['Construction'],
    ['Construct', '', { more: true }],
    ['Started', true, { more: true, focus: true }],
    ['Graphics'],
    ['View Scale', '  1 : 100'],
    ['Scale Value    1:', '100', { muted: true }],
    ['Detail Level', 'Fine'],
    ['Parts Visibility', 'Show Original'],
    ['Detail Number', '2'],
    ['Rotation on Sheet', 'None'],
    ['Visibility/Graphics Overrides', 'Edit...', { button: true }],
    ['Graphic Display Options', 'Edit...', { button: true }],
    ['Discipline', 'Coordination'],
    ['Show Hidden Lines', 'By Discipline'],
    ['Default Analysis Display Style', 'None'],
    ['Sun Path', false],
    ['Extents'],
    ['Crop View', false],
    ['Crop Region Visible', false],
    ['Annotation Crop', false],
    ['Far Clip Active', false],
    ['Far Clip Offset', '304800.00', { muted: true }],
    ['Section Box', false],
    ['Camera'],
    ['Rendering Settings', 'Edit...', { button: true }],
    ['Locked Orientation', false, { muted: true }],
    ['Perspective', false, { muted: true }],
    ['Eye Elevation', '15571.38'],
    ['Target Elevation', '3445.38'],
    ['Camera Position', 'Adjusting', { muted: true }],
    ['Identity Data'],
    ['View Template', '<None>', { button: true }],
    ['View Name', 'StartedOrNot'],
    ['Dependency', 'Independent', { muted: true }],
    ['Title on Sheet', ''],
    ['Sheet Number', 'AAAAAA', { muted: true }],
    ['Sheet Name', 'Unnamed', { muted: true }],
    ['ATK_ViewGroup', '', { more: true }],
    ['Phasing'],
    ['Phase Filter', 'Show All'],
    ['Phase', 'New Construction'],
];

// depth, toggle sign, label, icon
const browser = [
    [3, '+', 'Presentation'],
    [2, '+', 'Elevations (ATK_Elevation)'],
    [2, '+', 'Sections (ATK_Section)'],
    [2, '+', 'Sections (ATK_Section_12)'],
    [2, '+', 'Area Plans (Cost Estimating)'],
    [2, '+', 'Area Plans (Gross Building)'],
    [2, '+', 'Area Plans (Rentable)'],
    [1, '-', 'Coordination'],
    [2, '-', 'Floor Plans'],
    [3, '-', '1 Level'],
    [4, '', '1 Level - Mechanical'],
    [3, '+', 'SEM'],
    [2, '-', '3D Views'],
    [3, '-', '???'],
    [4, '', 'aaa'],
    [4, '', 'ConstructionStatus'],
    [4, '', 'StartedOrNot'],
    [3, '-', 'SEM Export'],
    [4, '', '3D-SEM'],
    [2, '-', 'Drafting Views (Detail)'],
    [3, '-', 'Splash Screen'],
    [4, '', 'Splash Screen'],
    [3, '-', 'StyleSamples'],
    [4, '', 'StyleSamples'],
    [1, '+', 'Electrical'],
    [1, '-', 'Mechanical'],
    [2, '-', 'Floor Plans'],
    [3, '-', '1 Level'],
    [4, '', '1 Level - Mechanical Copy 1'],
    [4, '', '1 Level - Mechanical Copy 1 Copy 1'],
    [1, '+', 'Plumbing'],
    [1, '+', 'Structural'],
    [0, '+', 'Legends', 'legend'],
    [0, '-', 'Schedules/Quantities', 'schedule'],
    ...[
        'Area Schedule (Cost Estimating)', 'Area Schedule (Gross Building)', 'Area Schedule (Gross Internal Area)',
        'Area Schedule (Rentable)', 'COBie2-Component', 'COBie2-Component-Door', 'COBie2-Component-Window',
        'COBie2-ComponentsToSchedule', 'COBie2-Space', 'COBie2-System', 'COBie2-Type', 'COBie2-Zone',
        'Door Schedule', 'Door Schedule - Aluminium', 'Door Schedule - Extended', 'Door Schedule - Steel',
        'Door Schedule - Timber', 'Drawing List', 'Multi-Category Schedule', 'OMNIClass13',
        'Publication View List', 'Revision Control', 'Room Area Schedule', 'Room Schedule',
        'Schedule Of Openings (Platform Level)', 'Sheet List',
    ].map((label) => [1, '', label]),
    [0, '+', 'Sheets'],
];

// true when another row of the given level follows before the branch ends
const continues = (index, level) => {
    const next = browser.slice(index + 1).find(([depth]) => depth <= level);
    return Boolean(next) && next[0] === level;
};

const viewTools = [
    'grid', 'box', 'sun', 'shadow', 'teapot', 'crop', 'cropLamp', 'lock', 'glasses', 'bulb', 'reveal',
    'workshare', 'displace', 'constraint',
];

const tasks = [
    ['skype', 'Skype'], ['ie', 'Internet Explorer', 'one'], ['autodesk', 'Autodesk', 'one'],
    ['skype', 'Skype for Business'], ['folder', 'Explorer'], ['outlook', 'Outlook', 'one'],
    ['excel', 'Excel', 'many'], ['chrome', 'Chrome', 'many'], ['revit', 'Revit', 'active'],
    ['camtasia', 'Camtasia', 'many'],
];

/* ---------- parts ---------- */

const Tool = ({ icon, label, drop, under, low, on }) => (
    <ToolButton $on={on}>
        <BigIcon name={icon} />
        <ToolLabel $low={low} $under={under}>
            {label}
            {drop && <Arrow $small />}
        </ToolLabel>
    </ToolButton>
);

const TitleRow = () => (
    <TitleBar>
        {quickTools.map((tool, i) => {
            if (tool === '|') return <QuickDivider key={i} />;
            if (tool === '>') return <QuickButton key={i} $narrow aria-label="More"><Arrow $small /></QuickButton>;
            return <QuickButton key={i} $on={tool === 'thin'} aria-label={tool}><Icon name={tool} /></QuickButton>;
        })}
        <Caption>{'Autodesk Revit 2017.1 -     space.rvt - 3D View: StartedOrNot'}</Caption>
        <TitleTools>
            <Arrow $to="right" />
            <SearchInput aria-label="Search" placeholder="Type a keyword or phrase" />
            {['binoculars', 'dish', 'star', 'person'].map((n) => <IconButton key={n} aria-label={n}><Icon name={n} /></IconButton>)}
            <IconButton $w={76}>CESARECAODU...<Arrow $small /></IconButton>
            <IconButton aria-label="Exchange"><Icon name="exchange" /></IconButton>
            <IconButton $w={46} aria-label="Help"><Icon name="help" size={15} /><Arrow $small /></IconButton>
            <IconButton aria-label="Minimize"><Icon name="min" /></IconButton>
            <IconButton aria-label="Restore"><Icon name="restore" /></IconButton>
            <IconButton aria-label="Close"><Icon name="close" size={13} /></IconButton>
        </TitleTools>
    </TitleBar>
);

const RibbonPanels = () => (
    <Ribbon>
        <Group $w={46}>
            <GroupBody><Tool icon="modify" label="Modify" on /></GroupBody>
            <GroupName>Select ▾</GroupName>
        </Group>
        <Group $w={698}>
            <GroupBody>
                <Cluster $w={460}>
                    <Tool icon="materials" label="Materials" />
                    <Tool icon="styles" label={'Object\nStyles'} />
                    <Tool icon="snaps" label="Snaps" />
                    <Tool icon="info" label={'Project\nInformation'} />
                    <Tool icon="params" label={'Project\nParameters'} />
                    <Tool icon="shared" label={'Shared\nParameters'} />
                    <Tool icon="global" label={'Global\nParameters'} />
                    <Tool icon="transfer" label={'Transfer\nProject Standards'} />
                    <Tool icon="purge" label={'Purge\nUnused'} />
                    <Tool icon="units" label={'Project\nUnits'} />
                </Cluster>
                <Cluster $w={236}>
                    <Tool icon="structural" label={'Structural\nSettings'} drop low />
                    <Tool icon="mep" label={'MEP\nSettings'} drop low />
                    <Tool icon="panel" label={'Panel Schedule\nTemplates'} drop low />
                    <Tool icon="wrench" label={'Additional\nSettings'} drop low />
                </Cluster>
            </GroupBody>
            <GroupName>Settings</GroupName>
        </Group>
        <Group $w={153}>
            <GroupBody>
                <Tool icon="location" label="Location" />
                <Tool icon="coordinates" label="Coordinates" drop under />
                <Tool icon="position" label="Position" drop under />
            </GroupBody>
            <GroupName>Project Location</GroupName>
        </Group>
        <Group $w={167}>
            <GroupBody>
                <Tool icon="options" label={'Design\nOptions'} />
                <Stack $grow>
                    <SmallTool disabled><Icon name="addSet" />Add to Set</SmallTool>
                    <SmallTool disabled><Icon name="pickEdit" />Pick to Edit</SmallTool>
                    <SelectFrame $flat>
                        <Select aria-label="Active design option" disabled><option>Main Model</option></Select>
                        <Arrow />
                    </SelectFrame>
                </Stack>
            </GroupBody>
            <GroupName>Design Options</GroupName>
        </Group>
        <Group $w={145}>
            <GroupBody>
                <Tool icon="links" label={'Manage\nLinks'} />
                <Tool icon="images" label={'Manage\nImages'} />
                <Tool icon="decal" label={'Decal\nTypes'} />
                <Tool icon="starting" label={'Starting\nView'} />
            </GroupBody>
            <GroupName>Manage Project</GroupName>
        </Group>
        <Group $w={41}>
            <GroupBody><Tool icon="phases" label="Phases" /></GroupBody>
            <GroupName>Phasing</GroupName>
        </Group>
        <Group $w={50}>
            <GroupBody>
                <Stack $grow>
                    <SmallTool disabled><Icon name="selSave" />Save</SmallTool>
                    <SmallTool disabled><Icon name="selLoad" />Load</SmallTool>
                    <SmallTool><Icon name="selEdit" />Edit</SmallTool>
                </Stack>
            </GroupBody>
            <GroupName>Selection</GroupName>
        </Group>
        <Group $w={95}>
            <GroupBody>
                <Stack $grow>
                    <SmallTool disabled><Icon name="ids" />IDs of Selection</SmallTool>
                    <SmallTool><Icon name="selectId" />Select by ID</SmallTool>
                    <SmallTool><Icon name="warnings" />Warnings</SmallTool>
                </Stack>
            </GroupBody>
            <GroupName>Inquiry</GroupName>
        </Group>
        <Group $w={83}>
            <GroupBody>
                <Tool icon="macroManager" label={'Macro\nManager'} />
                <Tool icon="macroSecurity" label={'Macro\nSecurity'} />
            </GroupBody>
            <GroupName>Macros</GroupName>
        </Group>
        <Group $w={85}>
            <GroupBody>
                <Tool icon="dynamo" label="Dynamo" />
                <Tool icon="player" label={'Dynamo\nPlayer'} />
            </GroupBody>
            <GroupName>Visual Programming</GroupName>
        </Group>
    </Ribbon>
);

const Value = ({ id, value, button, muted }) => {
    if (typeof value === 'boolean') return <CheckBox id={id} type="checkbox" defaultChecked={value} disabled={muted} />;
    if (button) return <RowButton id={id}>{value}</RowButton>;
    return value;
};

const PropertiesPalette = () => (
    <Palette $w={284}>
        <PaletteTitle>Properties<CloseMark /></PaletteTitle>
        <PaletteBody>
            <TypeSelector>
                <TypePreview>
                    <svg width="28" height="28" viewBox="0 0 28 28" stroke="#3f4b59">
                        <path d="M4 12v9l9 5V16Z" fill="#eef1f4" />
                        <path d="M13 16l6-8 5 6v7l-11 5Z" fill="#c3ccd6" />
                        <path d="M2 12L17 2l8 11-1 2-6-7-6 9Z" fill="#dde3ea" />
                        <path d="M2 12l3-5L17 2" fill="none" />
                        <path d="M7 16l3 2v6l-3-2Z" fill="#222" />
                    </svg>
                </TypePreview>
                <Grow>3D View</Grow>
                <Arrow />
            </TypeSelector>
            <FilterRow>
                <SelectFrame>
                    <Select aria-label="Instance filter"><option>3D View: StartedOrNot</option></Select>
                    <ScrollButton as="span"><Arrow /></ScrollButton>
                </SelectFrame>
                <EditType><Icon name="editType" size={15} />Edit Type</EditType>
            </FilterRow>
            <PropertyTable>
                <colgroup><col width="137" /><col /><col width="10" /></colgroup>
                <tbody>
                    {properties.map(([name, value, flags = {}]) => {
                        if (value === undefined) {
                            return (
                                <SectionRow key={name}>
                                    <th colSpan="3"><SectionHead>{name}<Icon name="chevrons" size={10} /></SectionHead></th>
                                </SectionRow>
                            );
                        }
                        const id = `prop-${name.replace(/\W/g, '')}`;
                        const control = typeof value === 'boolean' || flags.button;
                        return (
                            <PropertyRow key={name} $muted={flags.muted} $focus={flags.focus}>
                                <th>{control ? <label htmlFor={id}>{name}</label> : name}</th>
                                <td><Value id={id} value={value} {...flags} /></td>
                                <td>{flags.more && <RowButton aria-label={`Browse ${name}`} />}</td>
                            </PropertyRow>
                        );
                    })}
                </tbody>
            </PropertyTable>
        </PaletteBody>
        <PaletteFooter>
            <a href="#help">Properties help</a>
            <ApplyButton disabled>Apply</ApplyButton>
        </PaletteFooter>
    </Palette>
);

const BrowserPalette = () => (
    <Palette $w={237}>
        <PaletteTitle>Project Browser - space.rvt<CloseMark /></PaletteTitle>
        <PaletteBody>
            <TreeArea>
                <Tree>
                    {browser.map(([depth, sign, label, icon], i) => (
                        <TreeRow key={i}>
                            {[0, 1, 2, 3].slice(0, depth).map((level) => (
                                <Guide key={level} $level={level} $line={continues(i, level)} />
                            ))}
                            <Elbow $more={continues(i, depth)}>
                                {sign && <Toggle $plus={sign === '+'} aria-label={`Toggle ${label}`} />}
                            </Elbow>
                            {icon && <TreeIcon><Icon name={icon} size={13} /></TreeIcon>}
                            <Leaf $current={label === 'StartedOrNot'}>{label}</Leaf>
                        </TreeRow>
                    ))}
                </Tree>
                <Scrollbar vertical before={73} thumb={513} after={168} />
            </TreeArea>
            <Line>
                <Scrollbar fill before={1} thumb={180} after={17} />
                <Corner />
            </Line>
        </PaletteBody>
    </Palette>
);

const Started = { top: '#0099ff', front: '#003366', side: '#0066cc' };
const NotStarted = { top: '#ff00ff', front: '#660066', side: '#bb00bb' };

const Ducts = () => (
    <g stroke="#000" strokeWidth="1" strokeLinejoin="round">
        <g>
            <path d="M595 370 L1340 419 V434 L595 384Z" fill={Started.front} />
            <path d="M597 347 L1340 396 V419 L595 370Z" fill={Started.top} />
            <path d="M575 382 Q577 371 595 370 V384 Q578 385 575 395Z" fill={Started.side} />
            <path d="M539 379 C543 358 567 344 597 347 L595 370 Q577 371 574 382Z" fill={Started.top} />
            <path d="M574 382 L575 395 L559 503 L558 492Z" fill={Started.front} />
            <path d="M539 379 L574 382 L558 492 L522 489Z" fill={Started.top} />
            <path d="M522 489 L558 492 V505 L522 503Z" fill={Started.front} />
        </g>
        <g>
            <path d="M857 388 L856 402 Q849 402 848 407 L847 393Z" fill={Started.side} />
            <path d="M848 393 V406 L834 504 L831 502Z" fill={Started.side} />
            <path d="M795 500 V514 C796 537 817 550 844 552 V538Z" fill={Started.front} />
            <path d="M813 385 L857 388 L847 393 L812 390Z" fill={Started.top} />
            <path d="M812 390 L847 393 L831 502 L795 500Z" fill={Started.top} />
            <path d="M795 500 L831 502 Q832 514 847 515 L844 538 C817 536 796 521 795 500Z" fill={Started.top} />
            <path d="M844 538 L1238 564 L1237 579 L844 552Z" fill={Started.front} />
            <path d="M847 515 L1242 541 L1238 564 L844 538Z" fill={Started.top} />
        </g>
        <g>
            <path d="M1072 402 V416 Q1065 416 1064 421 V407Z" fill={Started.side} />
            <path d="M1064 407 V421 L1051 506 L1050 495Z" fill={Started.side} />
            <path d="M1028 399 L1072 402 L1064 407 L1027 404Z" fill={Started.top} />
            <path d="M1027 404 L1064 407 L1050 495 L1014 492Z" fill={Started.top} />
            <path d="M1014 492 L1050 495 V508 L1014 506Z" fill={Started.front} />
        </g>
        <g>
            <path d="M1297 432 L1300 418 L1341 420 V437 H1330 L1300 440Z" fill="#fff" stroke="none" />
            <path d="M1342 420 V436 L1334 438 V424Z" fill={NotStarted.side} />
            <path d="M1334 424 V438 L1320 531 L1320 520Z" fill={NotStarted.side} />
            <path d="M1300 417 L1342 420 L1334 424 L1299 422Z" fill={NotStarted.top} />
            <path d="M1299 422 L1334 424 L1320 520 L1284 518Z" fill={NotStarted.top} />
            <path d="M1284 518 L1320 520 L1319 534 L1284 532Z" fill={NotStarted.front} />
        </g>
        <g>
            <path d="M1238 564 Q1253 568 1253 578 V586 Q1251 580 1237 579Z" fill={NotStarted.front} />
            <path d="M1290 580 V591 L1274 695 V683Z" fill={NotStarted.side} />
            <path d="M1242 541 C1265 543 1291 559 1290 580 L1253 578 Q1253 567 1238 564Z" fill={NotStarted.top} />
            <path d="M1253 578 L1290 580 L1274 683 L1238 681Z" fill={NotStarted.top} />
            <path d="M1238 681 L1274 683 L1273 697 L1238 695Z" fill={NotStarted.front} />
        </g>
        <g>
            <path d="M1189 658 V676 L1185 712 L1184 691Z" fill={NotStarted.front} strokeWidth="2" />
            <path d="M1135 655 L1189 658 L1184 691 L1131 687Z" fill={NotStarted.top} />
            <path d="M1131 687 L1184 691 L1183 713 L1131 709Z" fill={NotStarted.front} />
            <path d="M1134 703 h4 v4 h-4Z M1168 695 v2 M1168 707 v2" fill="none" />
        </g>
    </g>
);

const ViewCube = () => (
    <g fontWeight="bold" textAnchor="middle">
        <path
            fillRule="evenodd"
            d="M1212 264a53 38 0 1 0 106 0a53 38 0 1 0 -106 0ZM1224 262a41 29 0 1 0 82 0a41 29 0 1 0 -82 0Z"
            fill="#f2f2f2"
            stroke="#bbb"
        />
        <ellipse cx="1264" cy="266" rx="26" ry="10" fill="#e2e2e2" />
        <path d="M1248 212 L1287 215 L1284 241 L1241 238Z" fill="#f3f3f3" stroke="#999" />
        <path d="M1241 238 L1284 241 L1283 271 L1243 267Z" fill="#e9e9e9" stroke="#999" />
        <g fontSize="8" fill="#8d8d8d">
            <text x="1265" y="229" transform="rotate(3 1265 229)">TOP</text>
            <text x="1263" y="259" transform="rotate(3 1263 259)">FRONT</text>
        </g>
        <g fontSize="15" fill="#eee" stroke="#999" strokeWidth=".8">
            <text x="1218" y="260">W</text>
            <text x="1313" y="268">E</text>
            <text x="1259" y="303">S</text>
        </g>
    </g>
);

const View3D = () => (
    <ViewColumn>
        <ViewRow>
            <Viewport>
                <Model viewBox="293 143 1047 795" preserveAspectRatio="xMaxYMin slice" role="img" aria-label="Duct model">
                    <g fill="none" stroke="#6fd36f">
                        <path d="M548 361 L452 355 L413 608 L1094 653" />
                        <path d="M682 391 L646 623" />
                        <path d="M668 482 L1340 526" />
                        <path d="M959 501 L938 643" />
                        <path d="M1116 511 L1107 570 L1075 782 L1340 800" />
                        <path d="M1264 430 L1251 520" />
                    </g>
                    <Ducts />
                    <ellipse cx="311" cy="396" rx="6" ry="4" fill="#0a90f0" stroke="#000" />
                    <ellipse cx="309" cy="408" rx="6" ry="4" fill="#f000f0" stroke="#000" />
                    <g fontSize="8" fontWeight="bold" fontFamily="Liberation Sans, sans-serif" fill="#000">
                        <text x="319" y="399" transform="rotate(4 319 399)">Started</text>
                        <text x="317" y="411" transform="rotate(4 317 411)">Not Started</text>
                    </g>
                    <ViewCube />
                </Model>
                <ViewButtons>
                    <IconButton aria-label="Minimize view"><Icon name="viewMin" size={12} /></IconButton>
                    <IconButton aria-label="Restore view"><Icon name="viewRestore" size={12} /></IconButton>
                    <IconButton aria-label="Close view"><Icon name="viewClose" size={12} /></IconButton>
                </ViewButtons>
                <NavBar>
                    <NavEdge aria-label="Close bar"><Icon name="ring" size={8} /></NavEdge>
                    <IconButton $w={22} aria-label="Steering wheel"><Icon name="wheel" size={22} /></IconButton>
                    <Arrow $small />
                    <NavRule />
                    <IconButton $w={22} aria-label="Zoom region"><Icon name="zoomRegion" size={14} /></IconButton>
                    <Arrow $small />
                    <NavEdge aria-label="Customize bar"><Icon name="ring" size={8} /></NavEdge>
                </NavBar>
            </Viewport>
            <Scrollbar vertical before={378} after={377} />
        </ViewRow>
        <ViewBar>
            <ScaleButton>1 : 100</ScaleButton>
            {viewTools.map((n) => <ViewTool key={n} aria-label={n}><Icon name={n} /></ViewTool>)}
            <Scrollbar fill before={350} after={349} />
            <Corner />
        </ViewBar>
    </ViewColumn>
);

const Status = () => (
    <StatusBar>
        <StatusText>Click to select, TAB for alternates, CTRL adds, SHIFT unselects.</StatusText>
        <StatusCell $w={460} $light>
            <IconButton $w={20} aria-label="Worksets"><Icon name="binoculars" /></IconButton>
            <SelectFrame $h={15} $w={171}>
                <Select aria-label="Active workset" disabled><option> </option></Select>
                <ScrollButton as="span"><Arrow /></ScrollButton>
            </SelectFrame>
            <IconButton $w={20} aria-label="Editing requests"><Icon name="hammer" /></IconButton>
            <Grow>:0</Grow>
            <IconButton $w={18} aria-label="Design options"><Icon name="list" /></IconButton>
            <IconButton $w={20} aria-label="Exit option"><Icon name="door" /></IconButton>
            <SelectFrame $h={15} $w={173}>
                <Select aria-label="Design option" disabled><option>Main Model</option></Select>
                <ScrollButton as="span"><Arrow /></ScrollButton>
            </SelectFrame>
        </StatusCell>
        <StatusCell $w={88} />
        <StatusCell $w={76} />
        <StatusCell $w={131} $light $spread>
            {['keys', 'underlay', 'pin', 'face', 'drag', 'gear'].map((n) => <IconButton key={n} aria-label={n}><Icon name={n} /></IconButton>)}
        </StatusCell>
        <StatusCell $w={78}><Icon name="funnel" />:0</StatusCell>
    </StatusBar>
);

const Taskbar = () => (
    <TaskBar>
        <StartButton><Icon name="windows" size={13} />Start</StartButton>
        {tasks.map(([icon, title, state]) => (
            <TaskButton key={title} aria-label={title} $open={state} $active={state === 'active'}>
                <Icon name={icon} size={14} />
            </TaskButton>
        ))}
        <Grow />
        EN
        <Tray>
            <Icon name="chevrons" size={10} />
            {['flag', 'cloud', 'network', 'power', 'volume'].map((n) => <Icon key={n} name={n} />)}
            <time>10:24 AM</time>
            <Icon name="desktop" />
        </Tray>
    </TaskBar>
);

const App = () => (
    <Screen>
        <GlobalStyle />
        <AppWindow>
            <Header>
                <TitleRow />
                <TabBar>
                    {tabs.map((tab) => <Tab key={tab} href={`#${tab}`} $active={tab === 'Manage'}>{tab}</Tab>)}
                    <IconButton $w={60} aria-label="Collapse ribbon">
                        <svg width="12" height="8" viewBox="0 0 12 8"><rect x="1" y="1" width="10" height="6" rx="2" fill="#fff" stroke="#333" /><path d="M4 5l2-2 2 2Z" fill="#222" /></svg>
                        <Arrow $small />
                    </IconButton>
                </TabBar>
                <AppButton aria-label="Application menu">
                    <svg width="22" height="28" viewBox="0 0 22 28"><text x="2" y="23" fontSize="25" fontWeight="bold" fill="#1d65ae">R</text></svg>
                    <Arrow />
                </AppButton>
            </Header>
            <RibbonPanels />
            <OptionsBar />
            <Workspace>
                <PropertiesPalette />
                <View3D />
                <BrowserPalette />
            </Workspace>
            <Status />
        </AppWindow>
        <Grip />
        <Taskbar />
    </Screen>
);

export default App;
